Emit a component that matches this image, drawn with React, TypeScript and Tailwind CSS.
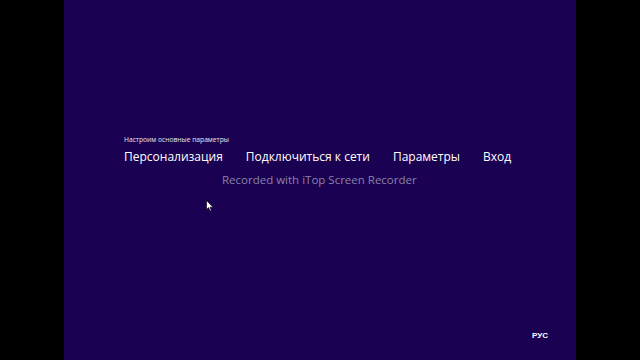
import React from "react";

export default function App() {
  return (
    <div className="flex h-[360px] w-[640px] bg-black" style={{ fontFamily: '"Open Sans", "Noto Sans", sans-serif' }}>
      <div className="w-[64px] shrink-0 bg-black" />
      <div className="relative flex w-[512px] flex-col bg-[#1a0152] pl-[60px] pt-[135px]">
        <div className="text-[6.7px] leading-[10px] text-white/90">Настроим основные параметры</div>
        <div className="mt-[3px] flex gap-[23px] text-[12px] leading-[18px] text-white">
          <span>Персонализация</span>
          <span>Подключиться к сети</span>
          <span>Параметры</span>
          <span>Вход</span>
        </div>
        <div className="mt-[6px] pl-[98px] text-[11.5px] leading-[16px] text-[#8a82aa]">Recorded with iTop Screen Recorder</div>
        <div className="absolute left-[142px] top-[200px]">
          <svg width="8" height="12" viewBox="0 0 8 12">
            <path d="M0.5 0.5 L0.5 9.5 L2.6 7.6 L4.1 11 L5.4 10.4 L4 7.2 L7 7.2 Z" fill="#ffffff" stroke="#000" strokeWidth="0.6" />
          </svg>
        </div>
        <div className="absolute left-[468px] top-[331px] text-[8px] font-bold leading-[10px] text-white" style={{ fontFamily: '"Liberation Sans", sans-serif' }}>РУС</div>
      </div>
      <div className="flex-1 bg-black" />
    </div>
  );
}
